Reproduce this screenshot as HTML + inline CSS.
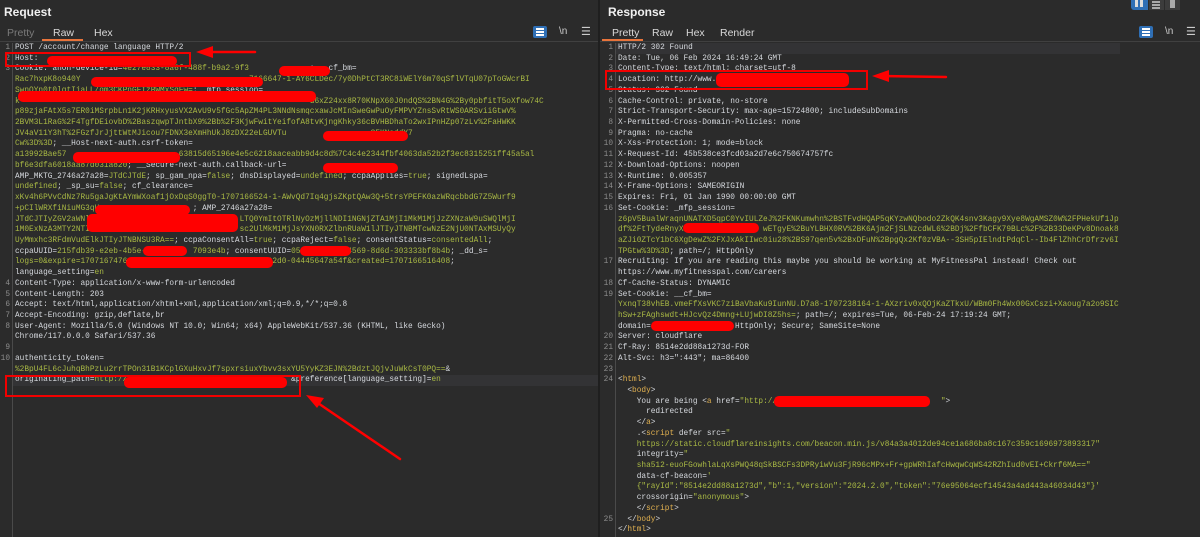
<!DOCTYPE html>
<html><head><meta charset="utf-8"><style>
*{margin:0;padding:0;box-sizing:border-box}
body{width:1200px;height:537px;background:#2b2b2b;position:relative;overflow:hidden;font-family:"Liberation Sans",sans-serif;color:#e6e6e6}
.abs{position:absolute}
.title{font-weight:bold;font-size:12px;color:#f0f0f0}
.tab{font-size:10.5px;color:#d8d8d8}
.code{position:absolute;font-family:"Liberation Mono",monospace;font-size:7.8px;line-height:10.72px;white-space:pre;color:#d6d9de}
.gut{position:absolute;font-family:"Liberation Mono",monospace;font-size:7.8px;line-height:10.72px;white-space:pre;color:#8c8c8c;text-align:right}
i{font-style:normal;color:#a9b944}
b{font-weight:normal;color:#e0b050}
.red{position:absolute;background:#ff0000;border-radius:5px}
.box{position:absolute;border:2px solid #f20000}
</style></head><body>
<div class="abs" style="left:598px;top:0;width:2px;height:537px;background:#1f1f1f"></div>
<div class="abs" style="left:0;top:41px;width:598px;height:1px;background:#404040"></div>
<div class="abs" style="left:600px;top:41px;width:600px;height:1px;background:#404040"></div>
<div class="abs title" style="left:4px;top:5px">Request</div>
<div class="abs title" style="left:608px;top:5px">Response</div>
<div class="abs tab" style="left:7px;top:27px;color:#7a7a7a">Pretty</div>
<div class="abs tab" style="left:53px;top:27px">Raw</div>
<div class="abs tab" style="left:94px;top:27px">Hex</div>
<div class="abs" style="left:42px;top:39px;width:41px;height:2px;background:#e8743b"></div>
<div class="abs tab" style="left:612px;top:27px">Pretty</div>
<div class="abs tab" style="left:652px;top:27px">Raw</div>
<div class="abs tab" style="left:686px;top:27px">Hex</div>
<div class="abs tab" style="left:720px;top:27px">Render</div>
<div class="abs" style="left:602px;top:39px;width:41px;height:2px;background:#e8743b"></div>
<div class="abs" style="left:533px;top:26px;width:14px;height:12px;background:#2f6fb5;border-radius:2px"></div>
<div class="abs" style="left:536px;top:28px;width:8px;height:1.5px;background:#fff;box-shadow:0 3px 0 #fff,0 6px 0 #fff"></div>
<div class="abs tab" style="left:559px;top:26px;font-size:10px;color:#ccc">\n</div>
<div class="abs tab" style="left:581px;top:25px;font-size:11px;color:#ccc">☰</div>
<div class="abs" style="left:1139px;top:26px;width:14px;height:12px;background:#2f6fb5;border-radius:2px"></div>
<div class="abs" style="left:1142px;top:28px;width:8px;height:1.5px;background:#fff;box-shadow:0 3px 0 #fff,0 6px 0 #fff"></div>
<div class="abs tab" style="left:1165px;top:26px;font-size:10px;color:#ccc">\n</div>
<div class="abs tab" style="left:1186px;top:25px;font-size:11px;color:#ccc">☰</div>
<div class="abs" style="left:1131px;top:0;width:17px;height:10px;background:#2f6fb5;border-radius:0 0 0 3px"></div>
<div class="abs" style="left:1135px;top:0;width:3px;height:7px;background:#ddd"></div>
<div class="abs" style="left:1140px;top:0;width:3px;height:7px;background:#ddd"></div>
<div class="abs" style="left:1149px;top:0;width:15px;height:10px;background:#3c3c3c"></div>
<div class="abs" style="left:1152px;top:1px;width:8px;height:1.5px;background:#aaa;box-shadow:0 3px 0 #aaa,0 6px 0 #aaa"></div>
<div class="abs" style="left:1165px;top:0;width:15px;height:10px;background:#3c3c3c"></div>
<div class="abs" style="left:1170px;top:0;width:5px;height:8px;background:#aaa"></div>
<div class="abs" style="left:12px;top:375px;width:586px;height:11px;background:#333335"></div>
<div class="abs" style="left:616px;top:43px;width:504px;height:11px;background:#333335"></div>
<div class="abs" style="left:12px;top:43px;width:1px;height:494px;background:#4a4a4a"></div>
<div class="abs" style="left:615px;top:43px;width:1px;height:494px;background:#4a4a4a"></div>
<div class="gut" style="left:0;top:43px;width:10px">1
2
3



















4
5
6
7
8

9
10</div>
<div class="gut" style="left:600px;top:43px;width:13px">1
2
3
4
5
6
7
8
9
10
11
12
13
14
15
16




17

18
19



20
21
22
23
24












25</div>
<div class="code" style="left:15px;top:43px">POST /account/change language HTTP/2
Host: 
Cookie: anon-device-id=<i>4e27e833-8a6f-488f-b9a2-9f3</i>             ; __cf_bm=
<i>Rac7hxpK8o940Y                                    7166647-1-AY6CLDec/7y0DhPtCT3RC8iWElY6m70qSflVTqU07pToGWcrBI</i>
<i>SwnOYn0t0lqtIjaLL/qm3CKPnGFIzBWMxSqFw=</i>; _mfp_session=
<i>k                                                              d6xZ24xx8R70KNpX60J0ndQS%2BN4G%2By0pbfitT5oXfow74C</i>
<i>p89zjaFAtX5s7ER0iMSrpbLn1K2jKRHxyusVX2AvU9v5fGc5ApZM4PL3NNdNsmqcxawJcMInSweGwPuOyFMPVYZnsSvRtWS0ARSviiGtwV%</i>
<i>2BVM3L1RaG%2F4TgfDEiovbD%2BaszqwpTJntbX9%2Bb%2F3KjwFwitYeifofA8tvKjngKhky36cBVHBDhaTo2wxIPnHZp07zLv%2FaHWKK</i>
<i>JV4aV11Y3hT%2FGzfJrJjttWtMJicou7FDNX3eXmHhUkJ8zDX22eLGUVTu                  2FKNsddY7</i>
<i>Cw%3D%3D</i>; __Host-next-auth.csrf-token=
<i>a13992Bae57                        63815d65196e4e5c6218aaceabb9d4c8d%7C4c4e2344fbf4063da52b2f3ec8315251ff45a5al</i>
<i>bf6e3dfa6018aa87d031a820</i>; __Secure-next-auth.callback-url=
AMP_MKTG_2746a27a28=<i>JTdCJTdE</i>; sp_gam_npa=<i>false</i>; dnsDisplayed=<i>undefined</i>; ccpaApplies=<i>true</i>; signedLspa=
<i>undefined</i>; _sp_su=<i>false</i>; cf_clearance=
<i>xKv4h6PVvCdNz7Ru5gaJgKtAYmWXoaf1jOxDqS0ggT0-1707166524-1-AWvQd7Iq4gjsZKptQAw3Q+5trsYPEFK0azWRqcbbdG7Z5Wurf9</i>
<i>+pCIlWRXfiNiuMG3qU</i>                    ; AMP_2746a27a28=
<i>JTdCJTIyZGV2aWNl                                LTQ0YmItOTRlNyOzMjllNDI1NGNjZTA1MjI1MkM1MjJzZXNzaW9uSWQlMjI</i>
<i>1M0ExNzA3MTY2NTI                                sc2UlMkM1MjJsYXN0RXZlbnRUaW1lJTIyJTNBMTcwNzE2NjU0NTAxMSUyQy</i>
<i>UyMmxhc3RFdmVudElkJTIyJTNBNSU3RA==</i>; ccpaConsentAll=<i>true</i>; ccpaReject=<i>false</i>; consentStatus=<i>consentedAll</i>;
ccpaUUID=<i>215fdb39-e2eb-4b5e-          7093e4b</i>; consentUUID=<i>05          4569-8d6d-303333bf8b4b</i>; _dd_s=
<i>logs=0&amp;expire=1707167476                              92d0-04445647a54f&amp;created=1707166516408</i>;
language_setting=<i>en</i>
Content-Type: application/x-www-form-urlencoded
Content-Length: 203
Accept: text/html,application/xhtml+xml,application/xml;q=0.9,*/*;q=0.8
Accept-Encoding: gzip,deflate,br
User-Agent: Mozilla/5.0 (Windows NT 10.0; Win64; x64) AppleWebKit/537.36 (KHTML, like Gecko)
Chrome/117.0.0.0 Safari/537.36

authenticity_token=
<i>%2BpU4FL6cJuhqBhPzLu2rrTPOn31B1KCplGXuHxvJf7spxrsiuxYbvv3sxYU5YyKZ3EJN%2BdztJQjvJuWkCsT0PQ==</i>&amp;
originating_path=<i>http://</i>                                   &amp;preference[language_setting]=<i>en</i></div>
<div class="code" style="left:618px;top:43px">HTTP/2 302 Found
Date: Tue, 06 Feb 2024 16:49:24 GMT
Content-Type: text/html; charset=utf-8
Location: http://www.
Status: 302 Found
Cache-Control: private, no-store
Strict-Transport-Security: max-age=15724800; includeSubDomains
X-Permitted-Cross-Domain-Policies: none
Pragma: no-cache
X-Xss-Protection: 1; mode=block
X-Request-Id: 45b538ce3fcd03a2d7e6c750674757fc
X-Download-Options: noopen
X-Runtime: 0.005357
X-Frame-Options: SAMEORIGIN
Expires: Fri, 01 Jan 1990 00:00:00 GMT
Set-Cookie: _mfp_session=
<i>z6pV5BualWraqnUNATXD5qpC0YvIULZeJ%2FKNKumwhn%2BSTFvdHQAP5qKYzwNQbodo2ZkQK4snv3Kagy9Xye8WgAMSZ0W%2FPHekUf1Jp</i>
<i>df%2FtTydeRnyX                 wETgyE%2BuYLBHX0RV%2BK6Ajm2FjSLNzcdWL6%2BDj%2FfbCFK79BLc%2F%2B33DeKPv8Dnoak8</i>
<i>aZJi0ZTcY1bC6XgDewZ%2FXJxAkIIwc0iu28%2BS97qen5v%2BxDFuN%2BpgQx2Kf0zVBA--3SH5pIElndtPdqCl--Ib4FlZhhCrDfrzv6I</i>
<i>TPGtw%3D%3D</i>; path=/; HttpOnly
Recruiting: If you are reading this maybe you should be working at MyFitnessPal instead! Check out
https://www.myfitnesspal.com/careers
Cf-Cache-Status: DYNAMIC
Set-Cookie: __cf_bm=
<i>YxnqT38vhEB.vmeFfXsVKC7ziBaVbaKu9IunNU.D7a8-1707238164-1-AXzriv0xQOjKaZTkxU/WBm0Fh4Wx00GxCszi+Xaoug7a2o9SIC</i>
<i>hSw+zFAghswdt+HJcvQz4Dmng+LUjwDI8Z5hs=</i>; path=/; expires=Tue, 06-Feb-24 17:19:24 GMT;
domain=                  HttpOnly; Secure; SameSite=None
Server: cloudflare
Cf-Ray: 8514e2dd88a1273d-FOR
Alt-Svc: h3=":443"; ma=86400

&lt;<b>html</b>&gt;
  &lt;<b>body</b>&gt;
    You are being &lt;<b>a</b> href=<i>"http://                                   "</i>&gt;
      redirected
    &lt;/<b>a</b>&gt;
    .&lt;<b>script</b> defer src=<i>"</i>
    <i>https://static.cloudflareinsights.com/beacon.min.js/v84a3a4012de94ce1a686ba8c167c359c1696973893317"</i>
    integrity=<i>"</i>
    <i>sha512-euoFGowhlaLqXsPWQ48qSkBSCFs3DPRyiwVu3FjR96cMPx+Fr+gpWRhIafcHwqwCqWS42RZhIud0vEI+Ckrf6MA=="</i>
    data-cf-beacon=<i>'</i>
    <i>{"rayId":"8514e2dd88a1273d","b":1,"version":"2024.2.0","token":"76e95064ecf14543a4ad443a46034d43"}'</i>
    crossorigin=<i>"anonymous"</i>&gt;
    &lt;/<b>script</b>&gt;
  &lt;/<b>body</b>&gt;
&lt;/<b>html</b>&gt;</div>
<div class="red" style="left:47px;top:56px;width:130px;height:10px"></div>
<div class="red" style="left:279px;top:66px;width:51px;height:10px"></div>
<div class="red" style="left:91px;top:77px;width:172px;height:10px"></div>
<div class="red" style="left:18px;top:91px;width:298px;height:11px"></div>
<div class="red" style="left:323px;top:131px;width:85px;height:10px"></div>
<div class="red" style="left:73px;top:152px;width:107px;height:11px"></div>
<div class="red" style="left:323px;top:163px;width:75px;height:10px"></div>
<div class="red" style="left:95px;top:205px;width:95px;height:10px"></div>
<div class="red" style="left:87px;top:214px;width:151px;height:18px"></div>
<div class="red" style="left:143px;top:246px;width:44px;height:10px"></div>
<div class="red" style="left:300px;top:246px;width:51px;height:10px"></div>
<div class="red" style="left:126px;top:257px;width:147px;height:11px"></div>
<div class="red" style="left:124px;top:377px;width:163px;height:11px"></div>
<div class="red" style="left:716px;top:73px;width:133px;height:14px"></div>
<div class="red" style="left:683px;top:223px;width:76px;height:10px"></div>
<div class="red" style="left:651px;top:321px;width:83px;height:10px"></div>
<div class="red" style="left:774px;top:396px;width:156px;height:11px"></div>
<div class="box" style="left:5px;top:52px;width:186px;height:15px"></div>
<div class="box" style="left:5px;top:375px;width:296px;height:22px"></div>
<div class="box" style="left:605px;top:70px;width:263px;height:20px"></div>
<svg class="abs" style="left:0;top:0" width="1200" height="537" viewBox="0 0 1200 537">
<g stroke="#f00" stroke-width="2.5" fill="none" stroke-linecap="round">
<line x1="255" y1="52" x2="202" y2="52"/>
<line x1="400" y1="459" x2="312" y2="399"/>
<line x1="946" y1="77" x2="878" y2="76"/>
</g>
<g fill="#f00">
<polygon points="196,52 213,46 213,58"/>
<polygon points="306,395 324,398 317,408"/>
<polygon points="872,76 889,70 889,82"/>
</g>
</svg>
</body></html>
